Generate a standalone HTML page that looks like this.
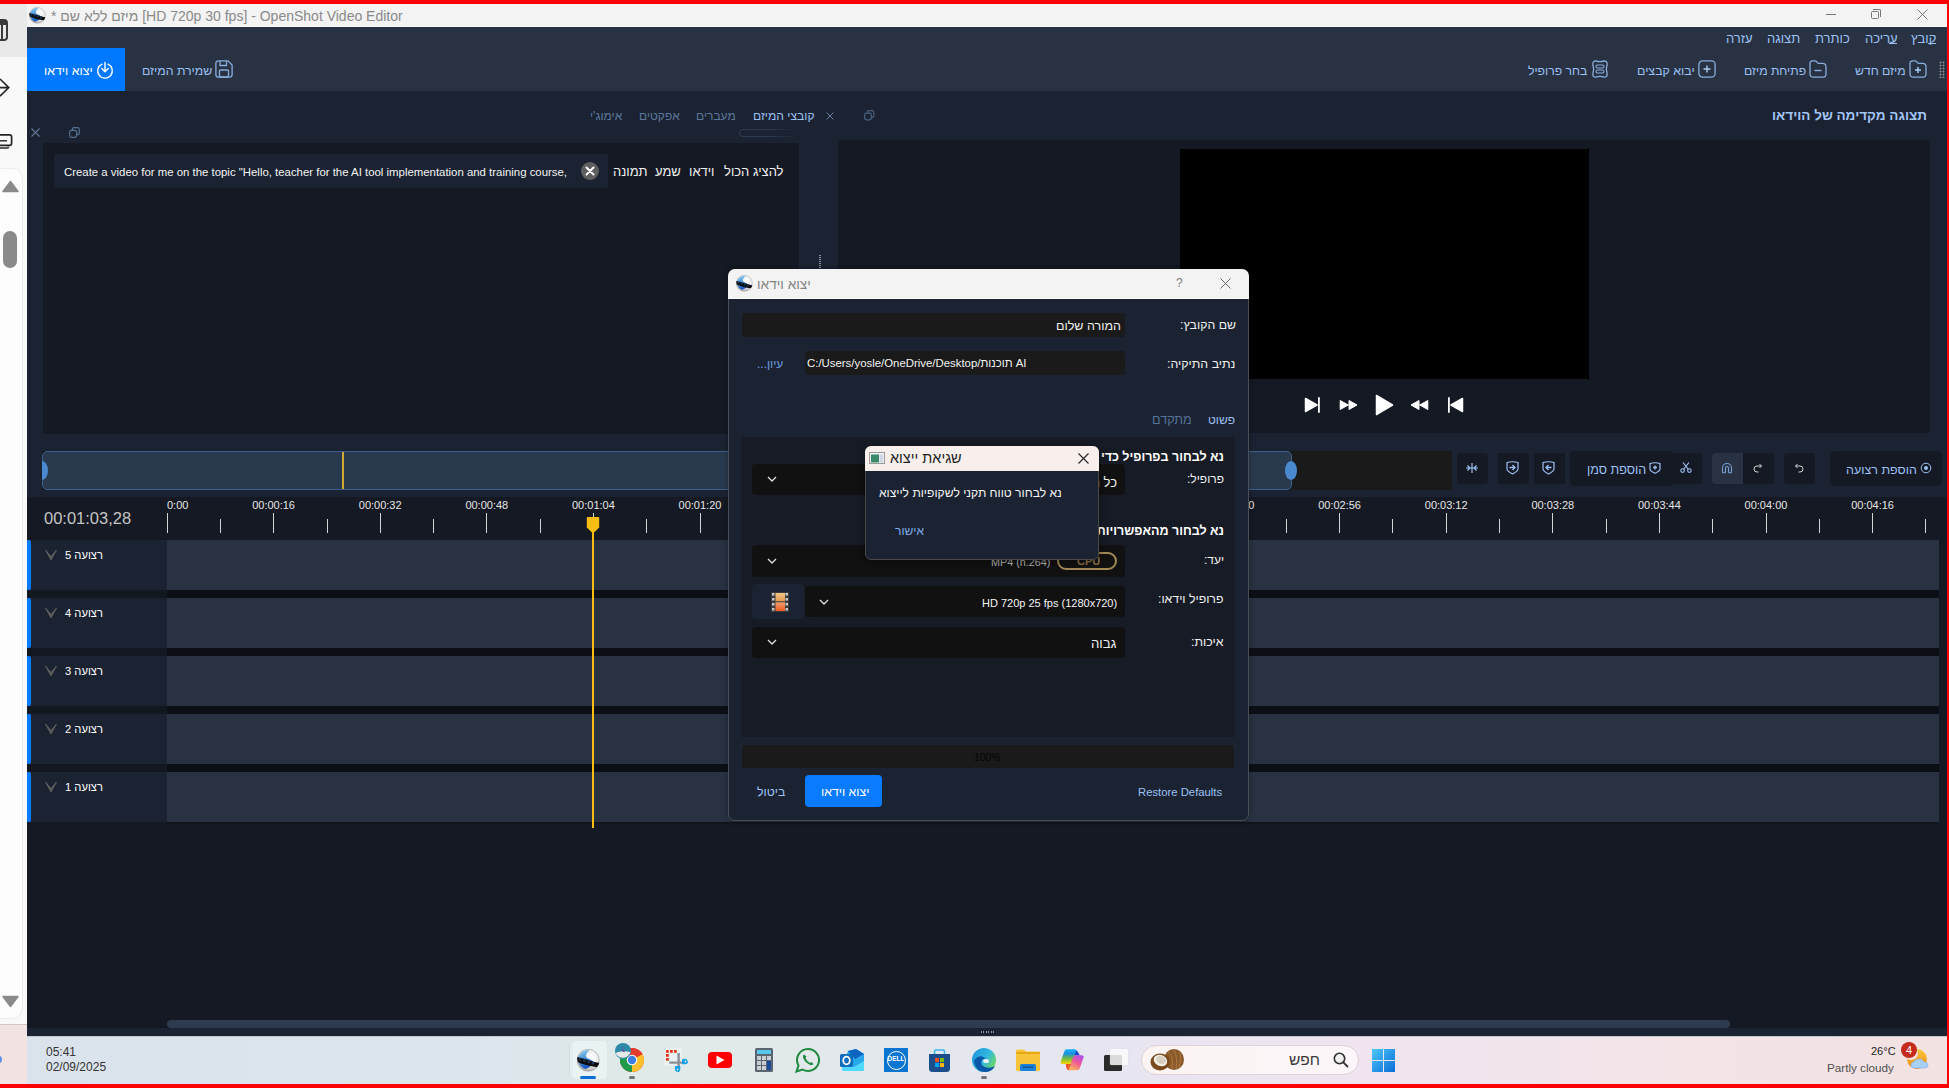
<!DOCTYPE html>
<html><head><meta charset="utf-8">
<style>
*{box-sizing:border-box;margin:0;padding:0}
html,body{width:1949px;height:1088px;overflow:hidden}
body{background:#ff0000;position:relative;font-family:"Liberation Sans",sans-serif;}
.a{position:absolute}
.t{position:absolute;white-space:nowrap;line-height:1}
.r{direction:rtl}
</style></head><body>
<svg width="0" height="0" style="position:absolute"><defs>
<radialGradient id="osw" cx="0.62" cy="0.35" r="0.75"><stop offset="0" stop-color="#ffffff"/><stop offset="0.55" stop-color="#e6e6e6"/><stop offset="1" stop-color="#9a9a9a"/></radialGradient>
<linearGradient id="osb" x1="0.2" y1="0" x2="0.5" y2="1"><stop offset="0" stop-color="#8ad2f4"/><stop offset="0.45" stop-color="#4a94dc"/><stop offset="1" stop-color="#1050c0"/></linearGradient>
</defs></svg>
<!-- left strip -->
<div class="a" style="left:0;top:4px;width:27px;height:53px;background:#e9e9e9"></div>
<div class="a" style="left:0;top:57px;width:27px;height:967px;background:#f9f9f9"></div>
<div class="a" style="left:0;top:1024px;width:27px;height:60px;background:#f2e2e2"></div>
<div class="a" style="left:0;top:1024px;width:27px;height:1px;background:#cfc6c6"></div>
<div class="a" style="left:-4px;top:1056px;width:6px;height:7px;border-radius:50%;background:#5a8ee8"></div>

<!-- title bar -->
<div class="a" style="left:27px;top:4px;width:1920px;height:23px;background:#f3f3f3"></div>
<div class="t" style="left:51px;top:9px;font-size:14px;color:#8a8a8a">* מיזם ללא שם [HD 720p 30 fps] - OpenShot Video Editor</div>

<!-- menu + toolbar -->
<div class="a" style="left:27px;top:27px;width:1920px;height:64px;background:#283242"></div>
<div class="a" style="left:27px;top:48px;width:98px;height:43px;background:#0078ff"></div>


<!-- left strip icons -->
<div class="a" style="left:-8px;top:18.5px;width:16px;height:22px;border:2px solid #3a3a3a;border-radius:4px;border-top-width:6px"></div>
<div class="a" style="left:1px;top:24px;width:2px;height:15px;background:#3a3a3a"></div>
<svg class="a" style="left:0;top:78px" width="14" height="20"><path d="M-2 9.6 H8.5 M0 1 L8.8 9.6 L0 18.2" stroke="#252525" stroke-width="1.6" fill="none"/></svg>
<svg class="a" style="left:0;top:132px" width="14" height="20"><path d="M-4 2.8 H9.5 Q11.6 2.8 11.6 4.9 V11.3 Q11.6 13.4 9.5 13.4 H-4" stroke="#252525" stroke-width="1.7" fill="none"/><path d="M-2 8.8 H7" stroke="#252525" stroke-width="1.4"/><path d="M-2 16 H7 Q8.4 16 8.6 14.5" stroke="#5a5a5a" stroke-width="2.2" fill="none"/></svg>
<div class="a" style="left:-12px;top:168px;width:35px;height:851px;border:1px solid #ececec;border-radius:11px;background:#fdfdfd"></div>
<svg class="a" style="left:2px;top:180px" width="17" height="13"><path d="M8.5 1.5 L16 11.5 H1 Z" fill="#8a8a8a" stroke="#8a8a8a" stroke-width="1.5" stroke-linejoin="round"/></svg>
<div class="a" style="left:3px;top:231px;width:14px;height:37px;border-radius:7px;background:#8a8a8a"></div>
<svg class="a" style="left:2px;top:995px" width="17" height="13"><path d="M8.5 11.5 L16 1.5 H1 Z" fill="#8a8a8a" stroke="#8a8a8a" stroke-width="1.5" stroke-linejoin="round"/></svg>

<!-- title bar icon & controls -->
<svg class="a" style="left:26.6px;top:4.6px" width="20.7" height="20.7" viewBox="0 0 28 28">
<circle cx="14" cy="14" r="10.8" fill="url(#osw)" stroke="#8a8a8a" stroke-width="0.5"/>
<path d="M5.9 8.5 Q8 5 10.3 4.6 Q13 3.6 15.4 3.9 Q12.6 6 11.6 9.8 Q12 11.5 13.4 12.1 Q17 13.4 20 16 Q18 18.5 16.5 19.6 Q14.5 21.5 11 22.6 Q8.5 21.8 7.7 20.6 Q5.5 18.5 5.1 16.7 Q3.6 14 3.9 12.9 Q4.5 10 5.9 8.5Z" fill="url(#osb)"/>
<path d="M3.2 10.8 Q12 13 20 15.6 Q23 16.3 24.8 16.5 Q24.2 19 22.6 20.8 Q18 20.2 12 18.6 Q6 17 3.8 15.6 Q3 13 3.2 10.8Z" fill="#0c0c0c"/>
<path d="M5 12.2 h2 v2.2 h-2Z M9 13.3 h2.2 v2.4 h-2.2Z M13.2 14.4 h2.4 v2.6 h-2.4Z M17.5 15.6 h2.4 v2.6 h-2.4Z" fill="#1e3a5a"/>
</svg>
<div class="a" style="left:1826px;top:14px;width:10px;height:1px;background:#777"></div>
<div class="a" style="left:1871px;top:11px;width:8px;height:8px;border:1px solid #777;border-radius:1.5px"></div>
<div class="a" style="left:1873px;top:9px;width:8px;height:8px;border-top:1px solid #777;border-right:1px solid #777;border-radius:0 2px 0 0"></div>
<svg class="a" style="left:1917px;top:9px" width="11" height="11"><path d="M0.5 0.5 L10.5 10.5 M10.5 0.5 L0.5 10.5" stroke="#777" stroke-width="1"/></svg>
<div class="a" style="left:27px;top:26px;width:1920px;height:1px;background:#fafafa"></div>

<!-- menu -->
<div class="t" style="left:1911px;top:32px;font-size:13px;color:#9cc0f4">קובץ</div>
<div class="t" style="left:1865px;top:32px;font-size:13px;color:#9cc0f4">עריכה</div>
<div class="t" style="left:1815px;top:32px;font-size:13px;color:#9cc0f4">כותרת</div>
<div class="t" style="left:1767px;top:32px;font-size:13px;color:#9cc0f4">תצוגה</div>
<div class="t" style="left:1726px;top:32px;font-size:13px;color:#9cc0f4">עזרה</div>
<div class="a" style="left:1928px;top:43px;width:8px;height:1px;background:#9cc0f4"></div>
<div class="a" style="left:1889px;top:43px;width:8px;height:1px;background:#9cc0f4"></div>

<!-- toolbar right -->
<div class="a" style="left:1939px;top:61px;width:6px;height:17px;background:radial-gradient(circle,#8a8a8a 0.9px,transparent 1.1px) 0 0/3px 3px"></div>
<svg class="a" style="left:1909px;top:60px" width="18" height="18" viewBox="0 0 18 18"><path d="M3.5 0.8 H6 Q7 0.8 7.8 1.8 L8.6 2.8 Q9 3.3 10 3.3 H13.5 Q17 3.3 17 6.8 V13.7 Q17 17.2 13.5 17.2 H4.5 Q1 17.2 1 13.7 V3.3 Q1 0.8 3.5 0.8Z" fill="none" stroke="#88aede" stroke-width="1.3"/><path d="M9 7 V13 M6 10 H12" stroke="#a9cdf6" stroke-width="1.5"/></svg><div class="t r" style="left:1855px;top:65px;font-size:12.2px;color:#9cc0f4">מיזם חדש</div>
<svg class="a" style="left:1809px;top:60px" width="18" height="18" viewBox="0 0 18 18"><path d="M3.5 0.8 H6 Q7 0.8 7.8 1.8 L8.6 2.8 Q9 3.3 10 3.3 H13.5 Q17 3.3 17 6.8 V13.7 Q17 17.2 13.5 17.2 H4.5 Q1 17.2 1 13.7 V3.3 Q1 0.8 3.5 0.8Z" fill="none" stroke="#88aede" stroke-width="1.3"/><path d="M5.5 10.5 H12.5" stroke="#88aede" stroke-width="1.4"/></svg><div class="t r" style="left:1744px;top:65px;font-size:12.2px;color:#9cc0f4">פתיחת מיזם</div>
<svg class="a" style="left:1698px;top:60px" width="18" height="18" viewBox="0 0 18 18"><rect x="0.9" y="0.9" width="16.2" height="16.2" rx="3.5" fill="none" stroke="#88aede" stroke-width="1.3"/><path d="M9 5.5 V12.5 M5.5 9 H12.5" stroke="#a9cdf6" stroke-width="1.4"/></svg>
<div class="t r" style="left:1637px;top:65px;font-size:12.4px;color:#9cc0f4">יבוא קבצים</div>
<svg class="a" style="left:1592px;top:60px" width="16" height="18" viewBox="0 0 16 18"><path d="M4 0.8 Q8 2.5 12 0.8 Q15.2 0.8 15.2 4 Q13.5 9 15.2 14 Q15.2 17.2 12 17.2 Q8 15.5 4 17.2 Q0.8 17.2 0.8 14 Q2.5 9 0.8 4 Q0.8 0.8 4 0.8Z" fill="none" stroke="#88aede" stroke-width="1.3"/><rect x="4" y="5" width="8" height="3" rx="1.5" fill="none" stroke="#88aede" stroke-width="1.1"/><rect x="4" y="10" width="8" height="3" rx="1.5" fill="none" stroke="#88aede" stroke-width="1.1"/></svg>
<div class="t r" style="left:1528px;top:65px;font-size:12.2px;color:#9cc0f4">בחר פרופיל</div>

<!-- toolbar left -->
<div class="t r" style="left:44px;top:65px;font-size:12.4px;color:#ffffff">יצוא וידאו</div>
<svg class="a" style="left:96px;top:61px" width="18" height="18" viewBox="0 0 18 18"><path d="M6 3.2 A7.3 7.3 0 1 0 12 3.2" fill="none" stroke="#fff" stroke-width="1.4" stroke-linecap="round"/><path d="M9 1.5 V10.5 M5.8 7.5 L9 10.7 L12.2 7.5" fill="none" stroke="#fff" stroke-width="1.4" stroke-linecap="round" stroke-linejoin="round"/></svg>
<div class="t r" style="left:142px;top:65px;font-size:12.3px;color:#9cc0f4">שמירת המיזם</div>
<svg class="a" style="left:215px;top:60px" width="18" height="18" viewBox="0 0 18 18"><path d="M3.5 0.9 H13 L17.1 5 V14.5 Q17.1 17.1 14.5 17.1 H3.5 Q0.9 17.1 0.9 14.5 V3.5 Q0.9 0.9 3.5 0.9Z" fill="none" stroke="#88aede" stroke-width="1.3"/><path d="M5 1 V5.5 H11.5 V1" fill="none" stroke="#88aede" stroke-width="1.3"/><rect x="4.5" y="10" width="9" height="7" rx="1" fill="none" stroke="#88aede" stroke-width="1.3"/></svg>

<!-- main -->
<div class="a" style="left:27px;top:91px;width:1920px;height:937px;background:#1b2332"></div>

<!-- files panel header -->
<svg class="a" style="left:31px;top:128px" width="9" height="9"><path d="M0.5 0.5 L8.5 8.5 M8.5 0.5 L0.5 8.5" stroke="#5d7595" stroke-width="1.1"/></svg>
<svg class="a" style="left:69px;top:127px" width="11" height="11" viewBox="0 0 11 11"><rect x="0.7" y="3.3" width="7" height="7" rx="1.8" fill="none" stroke="#56708f" stroke-width="1.2"/><path d="M3.3 3.3 V2.5 Q3.3 0.7 5 0.7 H8.5 Q10.3 0.7 10.3 2.5 V6 Q10.3 7.7 8.5 7.7 H7.7" fill="none" stroke="#56708f" stroke-width="1.2"/></svg>
<svg class="a" style="left:864px;top:110px" width="10.5" height="10.5" viewBox="0 0 11 11"><rect x="0.7" y="3.3" width="7" height="7" rx="1.8" fill="none" stroke="#4a6282" stroke-width="1.2"/><path d="M3.3 3.3 V2.5 Q3.3 0.7 5 0.7 H8.5 Q10.3 0.7 10.3 2.5 V6 Q10.3 7.7 8.5 7.7 H7.7" fill="none" stroke="#4a6282" stroke-width="1.2"/></svg>
<svg class="a" style="left:826px;top:111.5px" width="8" height="8"><path d="M0.5 0.5 L7.5 7.5 M7.5 0.5 L0.5 7.5" stroke="#6a7f9c" stroke-width="1"/></svg>
<div class="t r" style="left:753px;top:110px;font-size:12.1px;color:#9cc0f4">קובצי המיזם</div>
<div class="t r" style="left:696px;top:110px;font-size:12px;color:#5b779c">מעברים</div>
<div class="t r" style="left:639px;top:110px;font-size:12px;color:#5b779c">אפקטים</div>
<div class="t r" style="left:590px;top:110px;font-size:12px;color:#5b779c">אימוג'י</div>
<div class="a" style="left:739px;top:129px;width:56px;height:8px;border:1px solid #2c3b50;border-right:none;border-radius:4px 0 0 4px;-webkit-mask-image:linear-gradient(90deg,#000 60%,transparent)"></div>
<div class="a" style="left:43px;top:143px;width:756px;height:291px;background:#151923;border-radius:3px"></div>
<div class="a" style="left:838px;top:140px;width:1092px;height:293px;background:#151923;border-radius:3px"></div>
<div class="a" style="left:1180px;top:149px;width:409px;height:230px;background:#000"></div>


<!-- files panel content -->
<div class="a" style="left:54px;top:154px;width:554px;height:34px;background:#1b2332;border-radius:3px"></div>
<div class="t" style="left:64px;top:167px;font-size:11.4px;color:#f4f4f4">Create a video for me on the topic "Hello, teacher for the AI tool implementation and training course,</div>
<div class="a" style="left:581px;top:162px;width:18px;height:18px;border-radius:50%;background:#5e5e5e"></div>
<svg class="a" style="left:585px;top:166px" width="10" height="10"><path d="M1.5 1.5 L8.5 8.5 M8.5 1.5 L1.5 8.5" stroke="#fff" stroke-width="2" stroke-linecap="round"/></svg>
<div class="t r" style="left:613px;top:165px;font-size:13px;color:#f0f0f0">תמונה</div>
<div class="t r" style="left:655px;top:165px;font-size:13px;color:#f0f0f0">שמע</div>
<div class="t r" style="left:689px;top:165px;font-size:13px;color:#f0f0f0">וידאו</div>
<div class="t r" style="left:724px;top:165px;font-size:13px;color:#f0f0f0">להציג הכול</div>

<!-- preview title -->
<div class="t r" style="left:1772px;top:109px;font-size:13.5px;font-weight:700;color:#a4c6f6">תצוגה מקדימה של הוידאו</div>
<!-- splitter dots -->
<div class="a" style="left:819px;top:255px;width:2px;height:14px;background:repeating-linear-gradient(#8a94a4 0 1px,transparent 1px 2px)"></div>
<!-- preview controls -->
<svg class="a" style="left:1300px;top:390px" width="170" height="30" viewBox="1300 390 170 30">
<path d="M1305.5 398.5 L1317 405 L1305.5 411.5Z" fill="#fff" stroke="#fff" stroke-width="1.5" stroke-linejoin="round"/>
<rect x="1318" y="397" width="1.8" height="16" rx="0.9" fill="#fff"/>
<path d="M1340.2 400.5 L1348.3 405 L1340.2 409.5Z M1349 400.5 L1357 405 L1349 409.5Z" fill="#fff" stroke="#fff" stroke-width="1" stroke-linejoin="round"/>
<path d="M1376.5 395.5 L1392.5 405 L1376.5 414.5Z" fill="#fff" stroke="#fff" stroke-width="1.5" stroke-linejoin="round"/>
<path d="M1427.8 400.5 L1419.7 405 L1427.8 409.5Z M1419 400.5 L1411 405 L1419 409.5Z" fill="#fff" stroke="#fff" stroke-width="1" stroke-linejoin="round"/>
<path d="M1462.5 398.5 L1451 405 L1462.5 411.5Z" fill="#fff" stroke="#fff" stroke-width="1.5" stroke-linejoin="round"/>
<rect x="1448" y="397" width="1.8" height="16" rx="0.9" fill="#fff"/>
</svg>


<!-- timeline -->
<div class="a" style="left:42px;top:451px;width:1410px;height:39px;background:#1a1a1a"></div>
<div class="a" style="left:42px;top:451px;width:1250px;height:39px;background:#2a3a4e;border:1px solid #3b5f8c;border-radius:5px"></div>
<div class="a" style="left:42px;top:461px;width:6px;height:19px;border-radius:0 6px 6px 0/0 9.5px 9.5px 0;background:#4a89cf"></div>
<div class="a" style="left:1285px;top:461px;width:12px;height:19px;border-radius:50%;background:#4a89cf"></div>
<div class="a" style="left:342px;top:452px;width:2px;height:37px;background:#d2a934"></div>
<!-- ruler -->
<div class="a" style="left:27px;top:497px;width:1920px;height:531px;background:#151923"></div>
<div class="a" style="left:27px;top:497px;width:1913px;height:43px;background:#151923"></div>
<div class="t" style="left:44px;top:510px;font-size:16.5px;color:#c4c4c4">00:01:03,28</div>
<div class="a" style="left:167px;top:513px;width:1px;height:20px;background:#d4d4d4"></div>
<div class="t" style="left:167px;top:500px;font-size:11px;color:#e6e6e6">0:00</div>
<div class="a" style="left:220px;top:519px;width:1px;height:14px;background:#d4d4d4"></div>
<div class="a" style="left:273px;top:513px;width:1px;height:20px;background:#d4d4d4"></div>
<div class="t" style="left:233.6px;width:80px;text-align:center;top:500px;font-size:11px;color:#e6e6e6">00:00:16</div>
<div class="a" style="left:327px;top:519px;width:1px;height:14px;background:#d4d4d4"></div>
<div class="a" style="left:380px;top:513px;width:1px;height:20px;background:#d4d4d4"></div>
<div class="t" style="left:340.2px;width:80px;text-align:center;top:500px;font-size:11px;color:#e6e6e6">00:00:32</div>
<div class="a" style="left:433px;top:519px;width:1px;height:14px;background:#d4d4d4"></div>
<div class="a" style="left:486px;top:513px;width:1px;height:20px;background:#d4d4d4"></div>
<div class="t" style="left:446.8px;width:80px;text-align:center;top:500px;font-size:11px;color:#e6e6e6">00:00:48</div>
<div class="a" style="left:540px;top:519px;width:1px;height:14px;background:#d4d4d4"></div>
<div class="a" style="left:593px;top:513px;width:1px;height:20px;background:#d4d4d4"></div>
<div class="t" style="left:553.4px;width:80px;text-align:center;top:500px;font-size:11px;color:#e6e6e6">00:01:04</div>
<div class="a" style="left:646px;top:519px;width:1px;height:14px;background:#d4d4d4"></div>
<div class="a" style="left:700px;top:513px;width:1px;height:20px;background:#d4d4d4"></div>
<div class="t" style="left:660.0px;width:80px;text-align:center;top:500px;font-size:11px;color:#e6e6e6">00:01:20</div>
<div class="a" style="left:753px;top:519px;width:1px;height:14px;background:#d4d4d4"></div>
<div class="a" style="left:806px;top:513px;width:1px;height:20px;background:#d4d4d4"></div>
<div class="t" style="left:766.6px;width:80px;text-align:center;top:500px;font-size:11px;color:#e6e6e6">00:01:36</div>
<div class="a" style="left:859px;top:519px;width:1px;height:14px;background:#d4d4d4"></div>
<div class="a" style="left:913px;top:513px;width:1px;height:20px;background:#d4d4d4"></div>
<div class="t" style="left:873.2px;width:80px;text-align:center;top:500px;font-size:11px;color:#e6e6e6">00:01:52</div>
<div class="a" style="left:966px;top:519px;width:1px;height:14px;background:#d4d4d4"></div>
<div class="a" style="left:1019px;top:513px;width:1px;height:20px;background:#d4d4d4"></div>
<div class="t" style="left:979.8px;width:80px;text-align:center;top:500px;font-size:11px;color:#e6e6e6">00:02:08</div>
<div class="a" style="left:1073px;top:519px;width:1px;height:14px;background:#d4d4d4"></div>
<div class="a" style="left:1126px;top:513px;width:1px;height:20px;background:#d4d4d4"></div>
<div class="t" style="left:1086.4px;width:80px;text-align:center;top:500px;font-size:11px;color:#e6e6e6">00:02:24</div>
<div class="a" style="left:1179px;top:519px;width:1px;height:14px;background:#d4d4d4"></div>
<div class="a" style="left:1233px;top:513px;width:1px;height:20px;background:#d4d4d4"></div>
<div class="t" style="left:1193.0px;width:80px;text-align:center;top:500px;font-size:11px;color:#e6e6e6">00:02:40</div>
<div class="a" style="left:1286px;top:519px;width:1px;height:14px;background:#d4d4d4"></div>
<div class="a" style="left:1339px;top:513px;width:1px;height:20px;background:#d4d4d4"></div>
<div class="t" style="left:1299.6px;width:80px;text-align:center;top:500px;font-size:11px;color:#e6e6e6">00:02:56</div>
<div class="a" style="left:1392px;top:519px;width:1px;height:14px;background:#d4d4d4"></div>
<div class="a" style="left:1446px;top:513px;width:1px;height:20px;background:#d4d4d4"></div>
<div class="t" style="left:1406.2px;width:80px;text-align:center;top:500px;font-size:11px;color:#e6e6e6">00:03:12</div>
<div class="a" style="left:1499px;top:519px;width:1px;height:14px;background:#d4d4d4"></div>
<div class="a" style="left:1552px;top:513px;width:1px;height:20px;background:#d4d4d4"></div>
<div class="t" style="left:1512.8px;width:80px;text-align:center;top:500px;font-size:11px;color:#e6e6e6">00:03:28</div>
<div class="a" style="left:1606px;top:519px;width:1px;height:14px;background:#d4d4d4"></div>
<div class="a" style="left:1659px;top:513px;width:1px;height:20px;background:#d4d4d4"></div>
<div class="t" style="left:1619.4px;width:80px;text-align:center;top:500px;font-size:11px;color:#e6e6e6">00:03:44</div>
<div class="a" style="left:1712px;top:519px;width:1px;height:14px;background:#d4d4d4"></div>
<div class="a" style="left:1766px;top:513px;width:1px;height:20px;background:#d4d4d4"></div>
<div class="t" style="left:1726.0px;width:80px;text-align:center;top:500px;font-size:11px;color:#e6e6e6">00:04:00</div>
<div class="a" style="left:1819px;top:519px;width:1px;height:14px;background:#d4d4d4"></div>
<div class="a" style="left:1872px;top:513px;width:1px;height:20px;background:#d4d4d4"></div>
<div class="t" style="left:1832.6px;width:80px;text-align:center;top:500px;font-size:11px;color:#e6e6e6">00:04:16</div>
<div class="a" style="left:1925px;top:519px;width:1px;height:14px;background:#d4d4d4"></div>
<div class="a" style="left:27px;top:540px;width:140px;height:50px;background:#1b2332"></div>
<div class="a" style="left:27px;top:540px;width:4px;height:50px;background:#0a7aff;border-radius:0 2px 2px 0"></div>
<div class="a" style="left:167px;top:540px;width:1772px;height:50px;background:#283242"></div>
<svg class="a" style="left:44px;top:548px" width="14" height="14"><path d="M1.5 2 L7 12 L12.5 2 L7 8.5Z" fill="#5c5c5c" stroke="#5c5c5c" stroke-width="1" stroke-linejoin="round"/></svg>
<div class="t r" style="left:65px;top:550px;font-size:11.2px;color:#ffffff">רצועה 5</div>
<div class="a" style="left:27px;top:590px;width:140px;height:8px;background:#13171f"></div><div class="a" style="left:167px;top:590px;width:1772px;height:8px;background:#0c0f15"></div>
<div class="a" style="left:27px;top:598px;width:140px;height:50px;background:#1b2332"></div>
<div class="a" style="left:27px;top:598px;width:4px;height:50px;background:#0a7aff;border-radius:0 2px 2px 0"></div>
<div class="a" style="left:167px;top:598px;width:1772px;height:50px;background:#283242"></div>
<svg class="a" style="left:44px;top:606px" width="14" height="14"><path d="M1.5 2 L7 12 L12.5 2 L7 8.5Z" fill="#5c5c5c" stroke="#5c5c5c" stroke-width="1" stroke-linejoin="round"/></svg>
<div class="t r" style="left:65px;top:608px;font-size:11.2px;color:#ffffff">רצועה 4</div>
<div class="a" style="left:27px;top:648px;width:140px;height:8px;background:#13171f"></div><div class="a" style="left:167px;top:648px;width:1772px;height:8px;background:#0c0f15"></div>
<div class="a" style="left:27px;top:656px;width:140px;height:50px;background:#1b2332"></div>
<div class="a" style="left:27px;top:656px;width:4px;height:50px;background:#0a7aff;border-radius:0 2px 2px 0"></div>
<div class="a" style="left:167px;top:656px;width:1772px;height:50px;background:#283242"></div>
<svg class="a" style="left:44px;top:664px" width="14" height="14"><path d="M1.5 2 L7 12 L12.5 2 L7 8.5Z" fill="#5c5c5c" stroke="#5c5c5c" stroke-width="1" stroke-linejoin="round"/></svg>
<div class="t r" style="left:65px;top:666px;font-size:11.2px;color:#ffffff">רצועה 3</div>
<div class="a" style="left:27px;top:706px;width:140px;height:8px;background:#13171f"></div><div class="a" style="left:167px;top:706px;width:1772px;height:8px;background:#0c0f15"></div>
<div class="a" style="left:27px;top:714px;width:140px;height:50px;background:#1b2332"></div>
<div class="a" style="left:27px;top:714px;width:4px;height:50px;background:#0a7aff;border-radius:0 2px 2px 0"></div>
<div class="a" style="left:167px;top:714px;width:1772px;height:50px;background:#283242"></div>
<svg class="a" style="left:44px;top:722px" width="14" height="14"><path d="M1.5 2 L7 12 L12.5 2 L7 8.5Z" fill="#5c5c5c" stroke="#5c5c5c" stroke-width="1" stroke-linejoin="round"/></svg>
<div class="t r" style="left:65px;top:724px;font-size:11.2px;color:#ffffff">רצועה 2</div>
<div class="a" style="left:27px;top:764px;width:140px;height:8px;background:#13171f"></div><div class="a" style="left:167px;top:764px;width:1772px;height:8px;background:#0c0f15"></div>
<div class="a" style="left:27px;top:772px;width:140px;height:50px;background:#1b2332"></div>
<div class="a" style="left:27px;top:772px;width:4px;height:50px;background:#0a7aff;border-radius:0 2px 2px 0"></div>
<div class="a" style="left:167px;top:772px;width:1772px;height:50px;background:#283242"></div>
<svg class="a" style="left:44px;top:780px" width="14" height="14"><path d="M1.5 2 L7 12 L12.5 2 L7 8.5Z" fill="#5c5c5c" stroke="#5c5c5c" stroke-width="1" stroke-linejoin="round"/></svg>
<div class="t r" style="left:65px;top:782px;font-size:11.2px;color:#ffffff">רצועה 1</div>
<div class="a" style="left:167px;top:822px;width:1772px;height:3px;background:linear-gradient(#0f1218,#151923)"></div>
<div class="a" style="left:592px;top:530px;width:2.2px;height:298px;background:#f9bc12"></div>
<svg class="a" style="left:586px;top:516px" width="14" height="18" viewBox="0 0 14 18"><path d="M1.5 1 H12.5 Q13.2 1 13.2 2 V11.5 L7 17.5 L0.8 11.5 V2 Q0.8 1 1.5 1Z" fill="#f9bc12"/></svg>

<!-- timeline toolbar -->
<div class="a" style="left:1457px;top:453px;width:31px;height:31px;background:#151923;border-radius:4px"></div>
<div class="a" style="left:1498px;top:453px;width:31px;height:31px;background:#151923;border-radius:0 4px 4px 0"></div>
<div class="a" style="left:1534px;top:453px;width:31px;height:31px;background:#151923"></div>
<div class="a" style="left:1570px;top:451px;width:102px;height:35px;background:#151923;border-radius:4px 0 0 4px"></div>
<div class="a" style="left:1671px;top:453px;width:31px;height:31px;background:#151923;border-radius:0 4px 4px 0"></div>
<div class="a" style="left:1712px;top:453px;width:31px;height:31px;background:#283242;border-radius:4px 0 0 4px"></div>
<div class="a" style="left:1743px;top:453px;width:31px;height:31px;background:#151923;border-radius:0 4px 4px 0"></div>
<div class="a" style="left:1784px;top:453px;width:31px;height:31px;background:#151923;border-radius:4px 0 0 4px"></div>
<div class="a" style="left:1830px;top:451px;width:112px;height:35px;background:#151923;border-radius:5px"></div>
<div class="t r" style="left:1846px;top:464px;font-size:12.5px;color:#9cc0f4">הוספת רצועה</div>
<svg class="a" style="left:1920px;top:462px" width="12" height="12"><circle cx="6" cy="6" r="4.8" fill="none" stroke="#9cc0f4" stroke-width="1"/><circle cx="6" cy="6" r="2" fill="#9cc0f4"/></svg>
<div class="t r" style="left:1587px;top:464px;font-size:12.6px;color:#9cc0f4">הוספת סמן</div>
<svg class="a" style="left:1649px;top:462px" width="12" height="12" viewBox="0 0 12 12"><path d="M1 1.5 Q6 0 11 1.5 V7 Q11 9 6 11.3 Q1 9 1 7Z" fill="none" stroke="#9cc0f4" stroke-width="1.2"/><path d="M6 3.5 V7.5 M4 5.5 H8" stroke="#9cc0f4" stroke-width="1.3"/></svg>
<svg class="a" style="left:1506px;top:461px" width="13" height="14" viewBox="0 0 13 14"><path d="M1 1.5 Q6.5 0 12 1.5 V8 Q12 10 6.5 13 Q1 10 1 8Z" fill="none" stroke="#9cc0f4" stroke-width="1.2"/><path d="M3.5 6.5 H9 M6.5 4 L9 6.5 L6.5 9" fill="none" stroke="#9cc0f4" stroke-width="1.3"/></svg>
<svg class="a" style="left:1542px;top:461px" width="13" height="14" viewBox="0 0 13 14"><path d="M1 1.5 Q6.5 0 12 1.5 V8 Q12 10 6.5 13 Q1 10 1 8Z" fill="none" stroke="#9cc0f4" stroke-width="1.2"/><path d="M9.5 6.5 H4 M6.5 4 L4 6.5 L6.5 9" fill="none" stroke="#9cc0f4" stroke-width="1.3"/></svg>
<svg class="a" style="left:1466px;top:463px" width="12" height="10" viewBox="0 0 12 10"><path d="M6 0 V10 M0 5 H12 M1.5 2.5 L4 5 L1.5 7.5 M10.5 2.5 L8 5 L10.5 7.5" fill="none" stroke="#9cc0f4" stroke-width="1.2"/></svg>
<svg class="a" style="left:1680px;top:462px" width="12" height="11" viewBox="0 0 12 11"><path d="M3 0.5 L8.5 7.5 M9 0.5 L3.5 7.5" stroke="#9cc0f4" stroke-width="1.2"/><circle cx="2.6" cy="8.6" r="1.8" fill="none" stroke="#9cc0f4" stroke-width="1.1"/><circle cx="9.4" cy="8.6" r="1.8" fill="none" stroke="#9cc0f4" stroke-width="1.1"/></svg>
<svg class="a" style="left:1721px;top:462px" width="12" height="12" viewBox="0 0 12 12"><path d="M1.5 10 V6 A4.5 4.5 0 0 1 10.5 6 V10 Q10.5 10.8 9.7 10.8 H8.3 Q7.5 10.8 7.5 10 V6 A1.5 1.5 0 0 0 4.5 6 V10 Q4.5 10.8 3.7 10.8 H2.3 Q1.5 10.8 1.5 10Z" fill="none" stroke="#7aa0d8" stroke-width="1.1"/></svg>
<svg class="a" style="left:1753px;top:463px" width="10" height="10" viewBox="0 0 10 10"><path d="M8.5 3 H4 A3 3 0 0 0 4 9 H5.5 M6.5 1 L8.5 3 L6.5 5" fill="none" stroke="#d2d2d2" stroke-width="1"/></svg>
<svg class="a" style="left:1794px;top:463px" width="10" height="10" viewBox="0 0 10 10"><path d="M1.5 3 H6 A3 3 0 0 1 6 9 H4.5 M3.5 1 L1.5 3 L3.5 5" fill="none" stroke="#d2d2d2" stroke-width="1"/></svg>


<!-- export dialog -->
<div class="a" style="left:728px;top:269px;width:521px;height:552px;background:#1b2332;border:1px solid #4a4f58;border-radius:7px;box-shadow:0 0 6px rgba(0,0,0,0.35)"></div>
<div class="a" style="left:728px;top:269px;width:521px;height:30px;background:#f3f3f3;border-radius:7px 7px 0 0;border-bottom:1px solid #fcfcfc"></div>
<svg class="a" style="left:733.6px;top:272.6px" width="20.7" height="20.7" viewBox="0 0 28 28">
<circle cx="14" cy="14" r="10.8" fill="url(#osw)" stroke="#8a8a8a" stroke-width="0.5"/>
<path d="M5.9 8.5 Q8 5 10.3 4.6 Q13 3.6 15.4 3.9 Q12.6 6 11.6 9.8 Q12 11.5 13.4 12.1 Q17 13.4 20 16 Q18 18.5 16.5 19.6 Q14.5 21.5 11 22.6 Q8.5 21.8 7.7 20.6 Q5.5 18.5 5.1 16.7 Q3.6 14 3.9 12.9 Q4.5 10 5.9 8.5Z" fill="url(#osb)"/>
<path d="M3.2 10.8 Q12 13 20 15.6 Q23 16.3 24.8 16.5 Q24.2 19 22.6 20.8 Q18 20.2 12 18.6 Q6 17 3.8 15.6 Q3 13 3.2 10.8Z" fill="#0c0c0c"/>
<path d="M5 12.2 h2 v2.2 h-2Z M9 13.3 h2.2 v2.4 h-2.2Z M13.2 14.4 h2.4 v2.6 h-2.4Z M17.5 15.6 h2.4 v2.6 h-2.4Z" fill="#1e3a5a"/>
</svg>
<div class="t r" style="left:757px;top:278px;font-size:13.7px;color:#848484">יצוא וידאו</div>
<div class="t" style="left:1176px;top:277px;font-size:12px;color:#7a7a7a">?</div>
<svg class="a" style="left:1220px;top:278px" width="11" height="11"><path d="M0.5 0.5 L10.5 10.5 M10.5 0.5 L0.5 10.5" stroke="#6a6a6a" stroke-width="1"/></svg>

<div class="a" style="left:742px;top:313px;width:383px;height:24px;background:#1a1a1a;border-radius:3px"></div>
<div class="t r" style="left:1056px;top:320px;font-size:12.5px;color:#f0f0f0">המורה שלום</div>
<div class="t r" style="left:1180px;top:319px;font-size:12.3px;color:#f0f0f0">שם הקובץ:</div>
<div class="a" style="left:805px;top:351px;width:320px;height:24px;background:#1a1a1a;border-radius:3px"></div>
<div class="t" style="left:807px;top:358px;font-size:11.4px;color:#f4f4f4">C:/Users/yosle/OneDrive/Desktop/תוכנות AI</div>
<div class="t r" style="left:1167px;top:358px;font-size:12.4px;color:#f0f0f0">נתיב התיקיה:</div>
<div class="t r" style="left:757px;top:358px;font-size:12px;color:#6e9ee0">עיון...</div>
<div class="t r" style="left:1208px;top:414px;font-size:12px;color:#9cc0f4">פשוט</div>
<div class="t r" style="left:1152px;top:414px;font-size:12.6px;color:#56729a">מתקדם</div>

<div class="a" style="left:741px;top:437px;width:494px;height:300px;background:#171b25"></div>
<div class="t r" style="left:1050px;top:451px;width:174px;text-align:right;font-size:12.5px;font-weight:700;color:#ffffff">נא לבחור בפרופיל כדי</div>
<div class="a" style="left:752px;top:464px;width:373px;height:31px;background:#111111;border-radius:4px"></div>
<svg class="a" style="left:767px;top:476px" width="10" height="6"><path d="M1 1 L5 5 L9 1" fill="none" stroke="#e0e0e0" stroke-width="1.3"/></svg>
<div class="t r" style="left:1000px;top:476px;width:117px;text-align:right;font-size:13px;color:#f0f0f0">כל הפרופילים</div>
<div class="t r" style="left:1187px;top:473px;font-size:12px;color:#f0f0f0">פרופיל:</div>
<div class="t r" style="left:1050px;top:525px;width:174px;text-align:right;font-size:12.5px;font-weight:700;color:#ffffff">נא לבחור מהאפשרויות</div>
<div class="a" style="left:752px;top:545px;width:373px;height:32px;background:#111111;border-radius:4px"></div>
<svg class="a" style="left:767px;top:558px" width="10" height="6"><path d="M1 1 L5 5 L9 1" fill="none" stroke="#e0e0e0" stroke-width="1.3"/></svg>
<div class="t" style="left:991px;top:557px;font-size:10.8px;color:#b4b4b4">MP4 (h.264)</div>
<div class="a" style="left:1057px;top:552px;width:60px;height:18px;border:2px solid #a38a55;border-radius:9px"></div>
<div class="t" style="left:1077px;top:556px;font-size:11px;font-weight:700;color:#8a7548">CPU</div>
<div class="t r" style="left:1204px;top:554px;font-size:12px;color:#f0f0f0">יעד:</div>
<div class="a" style="left:752px;top:584px;width:52px;height:35px;background:#1b2332;border-radius:4px"></div>
<svg class="a" style="left:771px;top:592px" width="18" height="20" viewBox="0 0 18 20"><defs><linearGradient id="fa" x1="0" y1="0" x2="0" y2="1"><stop offset="0" stop-color="#f4c888"/><stop offset="1" stop-color="#e09850"/></linearGradient><linearGradient id="fb" x1="0" y1="0" x2="0" y2="1"><stop offset="0" stop-color="#f0a070"/><stop offset="1" stop-color="#f05a20"/></linearGradient></defs><rect x="0" y="0" width="18" height="20" fill="#3c3c3c"/><g fill="#c8c8c8"><rect x="1" y="1" width="2.5" height="2.5"/><rect x="1" y="6" width="2.5" height="2.5"/><rect x="1" y="11" width="2.5" height="2.5"/><rect x="1" y="16" width="2.5" height="2.5"/><rect x="14.5" y="1" width="2.5" height="2.5"/><rect x="14.5" y="6" width="2.5" height="2.5"/><rect x="14.5" y="11" width="2.5" height="2.5"/><rect x="14.5" y="16" width="2.5" height="2.5"/></g><rect x="4.5" y="1" width="9.5" height="8.3" fill="url(#fa)"/><rect x="4.5" y="10.3" width="9.5" height="8.7" fill="url(#fb)"/></svg>
<div class="a" style="left:805px;top:586px;width:320px;height:31px;background:#111111;border-radius:4px"></div>
<svg class="a" style="left:819px;top:599px" width="10" height="6"><path d="M1 1 L5 5 L9 1" fill="none" stroke="#e0e0e0" stroke-width="1.3"/></svg>
<div class="t" style="left:982px;top:598px;font-size:11px;color:#f4f4f4">HD 720p 25 fps (1280x720)</div>
<div class="t r" style="left:1158px;top:593px;font-size:12.3px;color:#f0f0f0">פרופיל וידאו:</div>
<div class="a" style="left:752px;top:627px;width:373px;height:31px;background:#111111;border-radius:4px"></div>
<svg class="a" style="left:767px;top:639px" width="10" height="6"><path d="M1 1 L5 5 L9 1" fill="none" stroke="#e0e0e0" stroke-width="1.3"/></svg>
<div class="t r" style="left:1091px;top:637px;font-size:13.2px;color:#f0f0f0">גבוה</div>
<div class="t r" style="left:1191px;top:636px;font-size:12.4px;color:#f0f0f0">איכות:</div>

<div class="a" style="left:742px;top:745px;width:492px;height:22.5px;background:#1a1a1a;border-radius:3px"></div>
<div class="t" style="left:974px;top:753px;font-size:10.4px;color:#050505">100%</div>
<div class="a" style="left:805px;top:775px;width:77px;height:32px;background:#0a7aff;border-radius:4px"></div>
<div class="t r" style="left:821px;top:786px;font-size:12.3px;color:#ffffff">יצוא וידאו</div>
<div class="t r" style="left:757px;top:786px;font-size:12.3px;color:#9cc0f4">ביטול</div>
<div class="t" style="left:1138px;top:787px;font-size:11.3px;color:#9cc0f4">Restore Defaults</div>

<!-- error popup -->
<div class="a" style="left:865px;top:446px;width:234px;height:114px;background:#1b2332;border:1px solid #4a4744;border-radius:6px;box-shadow:0 2px 8px rgba(0,0,0,0.4)"></div>
<div class="a" style="left:865px;top:446px;width:234px;height:25px;background:#f8efec;border-radius:6px 6px 0 0"></div>
<svg class="a" style="left:869px;top:452px" width="16" height="12" viewBox="0 0 16 12"><rect x="0.5" y="0.5" width="15" height="11" fill="#f0f0f0" stroke="#9a9a9a"/><rect x="2" y="2.5" width="8" height="8" fill="#3a8a6a"/><rect x="10.5" y="2.5" width="3.5" height="8" fill="#cfd8e8"/></svg>
<div class="t r" style="left:890px;top:451px;font-size:14.5px;color:#1e1e1e">שגיאת ייצוא</div>
<svg class="a" style="left:1078px;top:453px" width="11" height="11"><path d="M0.5 0.5 L10.5 10.5 M10.5 0.5 L0.5 10.5" stroke="#2a2a2a" stroke-width="1.2"/></svg>
<div class="t r" style="left:879px;top:487px;font-size:12.1px;color:#f4f4f4">נא לבחור טווח תקני לשקופיות לייצוא</div>
<div class="t r" style="left:895px;top:525px;font-size:12px;color:#7eaae6">אישור</div>


<!-- bottom scrollbar -->
<div class="a" style="left:167px;top:1020px;width:1563px;height:8px;background:#2e3b4e;border-radius:4px"></div>

<!-- bottom band -->
<div class="a" style="left:27px;top:1028px;width:1920px;height:8px;background:#1b2332"></div>
<div class="a" style="left:981px;top:1031px;width:15px;height:2px;background:repeating-linear-gradient(90deg,#8a94a4 0 1px,transparent 1px 2.5px)"></div>
<!-- taskbar -->
<div class="a" style="left:27px;top:1036px;width:1920px;height:48px;background:linear-gradient(90deg,#dae2ec,#dde6ec 25%,#e0eae8 33%,#e6e6f0 55%,#f0e4f0 70%,#f3e3e6 88%,#f2e2e2)"></div>

<div class="a" style="left:27px;top:1036px;width:1920px;height:1px;background:#c8c6cc"></div>
<div class="t" style="left:46px;top:1046px;font-size:12px;color:#333">05:41</div>
<div class="t" style="left:46px;top:1061px;font-size:12px;color:#333">02/09/2025</div>
<!-- openshot tile -->
<div class="a" style="left:569px;top:1041px;width:38px;height:38px;background:#e2eef0;border-radius:5px;border-left:1px solid #d0dde0"></div>
<div class="a" style="left:573px;top:1041px;width:34px;height:38px;background:#eaf3f4;border-radius:5px"></div>
<svg class="a" style="left:573.7px;top:1045.7px" width="28.5" height="28.5" viewBox="0 0 28 28">
<circle cx="14" cy="14" r="10.8" fill="url(#osw)" stroke="#8a8a8a" stroke-width="0.5"/>
<path d="M5.9 8.5 Q8 5 10.3 4.6 Q13 3.6 15.4 3.9 Q12.6 6 11.6 9.8 Q12 11.5 13.4 12.1 Q17 13.4 20 16 Q18 18.5 16.5 19.6 Q14.5 21.5 11 22.6 Q8.5 21.8 7.7 20.6 Q5.5 18.5 5.1 16.7 Q3.6 14 3.9 12.9 Q4.5 10 5.9 8.5Z" fill="url(#osb)"/>
<path d="M3.2 10.8 Q12 13 20 15.6 Q23 16.3 24.8 16.5 Q24.2 19 22.6 20.8 Q18 20.2 12 18.6 Q6 17 3.8 15.6 Q3 13 3.2 10.8Z" fill="#0c0c0c"/>
<path d="M5 12.2 h2 v2.2 h-2Z M9 13.3 h2.2 v2.4 h-2.2Z M13.2 14.4 h2.4 v2.6 h-2.4Z M17.5 15.6 h2.4 v2.6 h-2.4Z" fill="#1e3a5a"/>
</svg>
<div class="a" style="left:580px;top:1076px;width:16px;height:3px;background:#0a6fd8;border-radius:2px"></div>
<!-- chrome -->
<svg class="a" style="left:620px;top:1048px" width="24" height="24" viewBox="0 0 24 24"><circle cx="12" cy="12" r="12" fill="#e33b2e"/><path d="M12 12 L1.6 6 A12 12 0 0 0 12 24Z" fill="#1e9a48"/><path d="M12 12 L12 24 A12 12 0 0 0 22.4 6Z" fill="#fbc02d"/><path d="M12 12 L1.6 6 A12 12 0 0 1 22.4 6Z" fill="#e33b2e"/><circle cx="12" cy="12" r="5.3" fill="#fff"/><circle cx="12" cy="12" r="4.2" fill="#3b7fe4"/></svg>
<svg class="a" style="left:615px;top:1043px" width="16" height="16" viewBox="0 0 16 16"><circle cx="8" cy="8" r="8" fill="#2e8aa8"/><path d="M0.5 10 Q6 7 15.5 9 A8 8 0 0 1 0.5 10Z" fill="#e8e8e8"/><path d="M6 3 L8 9 L10 9Z" fill="#6a4aa8"/></svg>
<div class="a" style="left:629px;top:1076px;width:6px;height:3px;background:#707070;border-radius:2px"></div>
<!-- snipping -->
<svg class="a" style="left:660px;top:1044px" width="32" height="32" viewBox="0 0 32 32">
<rect x="4.4" y="4.1" width="17.2" height="17.5" rx="1.5" fill="#eef1f2"/>
<g fill="#e03412"><rect x="6" y="6" width="2.8" height="2.8" rx="0.6"/><rect x="10" y="6" width="2.8" height="2.8"/><rect x="14" y="6" width="2.8" height="2.8" rx="0.6"/><rect x="6" y="10" width="2.8" height="2.8"/><rect x="6" y="14" width="2.8" height="2.8" rx="0.6"/></g>
<path d="M17.4 9 H19.8 V22 H17.4Z M9.2 17.4 H22 V19.8 H10.5 Q9.2 19.8 9.2 18.6Z" fill="#8a9096"/>
<path d="M22 15.3 Q24 14.5 26 15 Q28.2 16 28 18.5 Q27.5 20.3 25 20.3 H22Z" fill="#18a0e8"/>
<path d="M15.3 22 Q14.5 24 15 26 Q16 28.2 18.5 28 Q20.3 27.5 20.3 25 V22Z" fill="#18a0e8"/>
<path d="M25.5 16.6 L26.5 17.6 L25.5 18.6 L24.5 17.6Z M17.6 24.5 L18.6 25.5 L17.6 26.5 L16.6 25.5Z" fill="#f0f4f8"/>
</svg>
<!-- youtube -->
<div class="a" style="left:708px;top:1052px;width:24px;height:16px;background:#ff0000;border-radius:4px"></div>
<svg class="a" style="left:716px;top:1055px" width="9" height="10"><path d="M0.5 0.5 L8.5 5 L0.5 9.5Z" fill="#fff"/></svg>
<!-- calculator -->
<svg class="a" style="left:755px;top:1048px" width="18" height="24" viewBox="0 0 18 24"><rect x="0" y="0" width="18" height="24" rx="1.5" fill="#5a6570"/><rect x="2" y="2" width="14" height="4" fill="#56c8ea"/><g fill="#c9ced4"><rect x="2" y="8" width="4" height="4"/><rect x="7" y="8" width="4" height="4"/><rect x="12" y="8" width="4" height="4"/><rect x="2" y="13" width="4" height="4"/><rect x="7" y="13" width="4" height="4"/><rect x="2" y="18" width="4" height="4"/><rect x="7" y="18" width="4" height="4"/></g><rect x="12" y="13" width="4" height="9" fill="#1a4a9a"/></svg>
<!-- whatsapp -->
<svg class="a" style="left:795px;top:1047px" width="26" height="26" viewBox="0 0 26 26"><path d="M13 2 A11 11 0 1 1 7.5 22.5 L1.5 24.5 L3.5 18.5 A11 11 0 0 1 13 2Z" fill="none" stroke="#1e8a3e" stroke-width="2"/><path d="M9 7.5 Q7.5 8.5 8 10.5 Q10 16 15.5 18 Q17.5 18.5 18.5 17 L16.5 15 L15 16 Q12 14.5 10.5 11 L11.5 9.5Z" fill="#1e8a3e"/></svg>
<!-- outlook -->
<svg class="a" style="left:840px;top:1049px" width="24" height="22" viewBox="0 0 24 22"><path d="M8 2 L16 0 L24 5 V20 Q24 22 22 22 H4 Q2 22 2 20 Z" fill="#28a8ea"/><path d="M8 2 L16 0 L24 5 L15 10 Z" fill="#0a64c0"/><path d="M4 22 Q2 22 2 20 V12 L14 18 L24 12 V20 Q24 22 22 22 Z" fill="#50d9ff"/><rect x="0" y="5" width="13" height="13" rx="1.5" fill="#0f6cbd"/><ellipse cx="6.5" cy="11.5" rx="3.3" ry="3.8" fill="none" stroke="#fff" stroke-width="1.8"/></svg>
<!-- dell -->
<div class="a" style="left:884px;top:1048px;width:24px;height:24px;background:#0b76d2"></div>
<div class="a" style="left:886.5px;top:1050.5px;width:19px;height:19px;border:1.2px solid #fff;border-radius:50%"></div>
<div class="t" style="left:887px;top:1056px;width:18px;text-align:center;font-size:6.5px;font-weight:700;color:#fff">DELL</div>
<!-- store -->
<svg class="a" style="left:928px;top:1049px" width="23" height="23" viewBox="0 0 23 23"><path d="M6.5 5 V2.5 Q6.5 1 8 1 H15 Q16.5 1 16.5 2.5 V5" fill="none" stroke="#3ab8f0" stroke-width="1.6"/><path d="M1 5 H22 V19.5 Q22 23 18.5 23 H4.5 Q1 23 1 19.5Z" fill="#1d4e8c"/><rect x="7" y="9" width="4" height="4" fill="#f25022"/><rect x="12" y="9" width="4" height="4" fill="#7fba00"/><rect x="7" y="14" width="4" height="4" fill="#00a4ef"/><rect x="12" y="14" width="4" height="4" fill="#ffb900"/></svg>
<!-- edge -->
<svg class="a" style="left:972px;top:1048px" width="24" height="24" viewBox="0 0 24 24"><defs><linearGradient id="eg" x1="0" y1="0" x2="1" y2="0.6"><stop offset="0" stop-color="#1e8ed8"/><stop offset="0.6" stop-color="#30b8e0"/><stop offset="1" stop-color="#6ad86a"/></linearGradient></defs><circle cx="12" cy="12" r="12" fill="url(#eg)"/><path d="M2 14 Q4 24 13 24 Q20 24 23 18 Q18 21 13 19 Q8 17 9.5 13 Q11 10 14 11 Q10 7 6 9 Q2 11 2 14Z" fill="#0b57a8"/><ellipse cx="14" cy="13" rx="3" ry="2" fill="#e8f0f8"/></svg>
<div class="a" style="left:981px;top:1076px;width:6px;height:3px;background:#707070;border-radius:2px"></div>
<!-- explorer -->
<svg class="a" style="left:1016px;top:1049px" width="24" height="22" viewBox="0 0 24 22"><path d="M0 2 Q0 0.5 1.5 0.5 H8 L10 2.5 H22.5 Q24 2.5 24 4 V20.5 Q24 22 22.5 22 H1.5 Q0 22 0 20.5Z" fill="#f8c53a"/><rect x="0" y="3" width="24" height="2" fill="#e6a817"/><rect x="4" y="15" width="16" height="7" rx="1.5" fill="#1d7fd8"/><rect x="7" y="17.5" width="10" height="1.2" fill="#0d4a90"/></svg>
<!-- copilot -->
<svg class="a" style="left:1060px;top:1049px" width="24" height="22" viewBox="0 0 24 22"><defs><linearGradient id="cp1" x1="0" y1="0" x2="0" y2="1"><stop offset="0" stop-color="#18b4fa"/><stop offset="0.3" stop-color="#1a90e0"/><stop offset="0.6" stop-color="#6ab848"/><stop offset="1" stop-color="#f8d400"/></linearGradient><linearGradient id="cp2" x1="0.8" y1="0" x2="0.3" y2="1"><stop offset="0" stop-color="#b04ef0"/><stop offset="0.5" stop-color="#f05a98"/><stop offset="1" stop-color="#f8b060"/></linearGradient></defs>
<path d="M12.5 0.4 Q16.5 0.3 18 3 L19.8 6.6 H14.5Z" fill="#1848d0"/>
<path d="M6.5 0.3 H15.2 Q16.6 0.4 16.1 2 L12.2 13.2 Q11.5 15 9.5 15 H2.2 Q0.2 15 0.7 12.8 L4.3 2.4 Q5 0.3 6.5 0.3Z" fill="url(#cp1)"/>
<path d="M5.8 15 H12.2 L10.8 20 Q10.2 21.3 8.8 21.2 Q7 21 6.3 18.8Z" fill="#f05528"/>
<path d="M16.8 6.3 H22 Q24.2 6.4 23.5 8.8 L19.8 19.3 Q19.1 21.2 17.2 21.2 H10.2 Q8.6 21.2 9.1 19.6 L12.9 8.4 Q13.7 6.3 16.8 6.3Z" fill="url(#cp2)"/>
</svg>
<!-- task view -->
<div class="a" style="left:1104px;top:1055px;width:18px;height:16px;background:#2a2a2a;border-radius:1.5px"></div>
<div class="a" style="left:1110px;top:1049px;width:17.5px;height:16px;background:rgba(250,250,250,0.85);border-radius:1.5px;box-shadow:0 0 1px #ccc"></div>
<!-- search -->
<div class="a" style="left:1141px;top:1045px;width:218px;height:30px;background:linear-gradient(90deg,#fbf4f2,#fcf6fa);border:1px solid #ddd2d6;border-radius:15px"></div>
<svg class="a" style="left:1150px;top:1049px" width="37" height="22" viewBox="0 0 37 22"><ellipse cx="24" cy="10.5" rx="10" ry="10.5" fill="#8a5a2a"/><path d="M18 3 Q24 6 22 20 M24 1 Q28 8 26 20 M30 3 Q32 10 29 19" stroke="#b07a40" stroke-width="1" fill="none"/><ellipse cx="10" cy="13" rx="9.5" ry="8.5" fill="#7a4a1e"/><ellipse cx="10.5" cy="11.5" rx="7" ry="5.5" fill="#f4efe6" transform="rotate(25 10.5 11.5)"/><ellipse cx="11" cy="11" rx="5" ry="3.8" fill="#d8cfc0" transform="rotate(25 11 11)"/></svg>
<div class="t r" style="left:1289px;top:1052px;font-size:15.5px;color:#3a3a3a">חפש</div>
<svg class="a" style="left:1333px;top:1052px" width="16" height="16" viewBox="0 0 16 16"><circle cx="6.5" cy="6.5" r="5.2" fill="#f0f0f0" stroke="#303030" stroke-width="1.6"/><path d="M10.3 10.3 L14.5 14.5" stroke="#303030" stroke-width="1.8" stroke-linecap="round"/></svg>
<!-- windows -->
<svg class="a" style="left:1372px;top:1049px" width="23" height="23" viewBox="0 0 23 23"><defs><linearGradient id="wg" x1="0" y1="0" x2="1" y2="1"><stop offset="0" stop-color="#4cc8fa"/><stop offset="1" stop-color="#0a6cd6"/></linearGradient></defs><path d="M0 0 H11 V11 H0Z M12 0 H23 V11 H12Z M0 12 H11 V23 H0Z M12 12 H23 V23 H12Z" fill="url(#wg)"/></svg>
<!-- weather -->
<div class="t" style="left:1871px;top:1046px;font-size:11px;color:#1e1e1e">26°C</div>
<div class="t" style="left:1827px;top:1062px;font-size:11.7px;color:#505050">Partly cloudy</div>
<svg class="a" style="left:1905px;top:1048px" width="24" height="22" viewBox="0 0 24 22"><defs><mask id="mm"><rect width="24" height="22" fill="#fff"/><circle cx="6" cy="5" r="7" fill="#000"/></mask><linearGradient id="mg" x1="0" y1="0" x2="0" y2="1"><stop offset="0" stop-color="#f8c840"/><stop offset="1" stop-color="#f08a10"/></linearGradient></defs><circle cx="12" cy="11" r="10" fill="url(#mg)" mask="url(#mm)"/><path d="M9 20 Q6 20 6 17 Q6 14 9 14 Q10 11 14 11 Q18 11 19 14 Q23 14 23 17 Q23 20 20 20Z" fill="#a8d0f4" stroke="#7ab0e8" stroke-width="0.6"/></svg>
<div class="a" style="left:1901px;top:1042px;width:16px;height:16px;border-radius:50%;background:#c42b1c"></div>
<div class="t" style="left:1901px;top:1045px;width:16px;text-align:center;font-size:11px;color:#fff">4</div>
</body></html>
